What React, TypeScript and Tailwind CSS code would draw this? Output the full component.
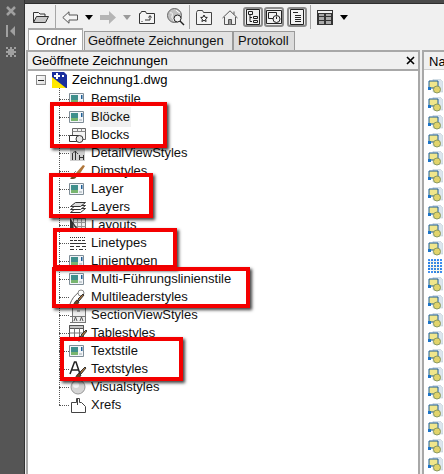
import React from "react";

const Sep = ({ c }: { c: string }) => <div className={`w-px h-[24px] bg-[#a6a6a6] shrink-0 ${c}`} />;

const Caret = ({ c = "#000", cn = "" }: { c?: string; cn?: string }) => (
  <svg className={`shrink-0 ${cn}`} width="8" height="5" viewBox="0 0 8 5"><path d="M0 0h8L4 5z" fill={c} /></svg>
);

const Folder = () => (
  <svg className="shrink-0" width="16" height="12" viewBox="0 0 16 12" fill="none" stroke="#333">
    <path d="M.5 11.500v-10h5l1.500 1.500h5v2" fill="#f3f3f3" />
    <path d="M.5 11.500l3-6h12l-3 6z" fill="#c9c9c9" />
  </svg>
);

const ArrowLeft = ({ cn }: { cn: string }) => (
  <svg className={`shrink-0 ${cn}`} width="16" height="13" viewBox="0 0 16 13"><path d="M7 .800L.8 6.500 7 12.200V9h8.500V4H7z" fill="#f4f4f4" stroke="#555" /></svg>
);
const ArrowRight = ({ cn }: { cn: string }) => (
  <svg className={`shrink-0 ${cn}`} width="16" height="13" viewBox="0 0 16 13"><path d="M9 0l7 6.500L9 13V9H0V4h9z" fill="#b5b5b5" /></svg>
);
const UpFolder = ({ cn }: { cn: string }) => (
  <svg className={`shrink-0 ${cn}`} width="16" height="14" viewBox="0 0 16 14" fill="none" stroke="#333">
    <path d="M.5 13.500v-10h1l1-2h4l1 2h8v10z" fill="#f4f4f4" />
    <path d="M6 10h5V6.500M9.500 7.500l1.500-2 1.500 2" />
    <path d="M2.500 11.500h2" strokeDasharray="1 1" />
  </svg>
);
const GlobeSearch = ({ cn }: { cn: string }) => (
  <svg className={`shrink-0 ${cn}`} width="18" height="18" viewBox="0 0 18 18" fill="none">
    <circle cx="7.500" cy="7.500" r="7" fill="#c0c0c0" stroke="#666" />
    <path d="M3 5c2-1 3 1 2 3s2 3 2 5M9 2c1 2 3 2 4 3" stroke="#fff" />
    <circle cx="10.500" cy="10.500" r="3.500" fill="#f2f2f2" stroke="#222" />
    <path d="M13 13l4 4" stroke="#222" strokeWidth="1.500" />
  </svg>
);
const FavFolder = ({ cn }: { cn: string }) => (
  <svg className={`shrink-0 ${cn}`} width="16" height="15" viewBox="0 0 16 15" fill="none" stroke="#444">
    <path d="M.5 14.500v-12l1-2h5l1 2h8v12z" fill="#f4f4f4" />
    <path d="M8 5l1 2.200 2.300.300-1.700 1.600.5 2.400L8 10.300l-2.100 1.200.5-2.400-1.700-1.600L7 7.200z" fill="#fff" stroke="#222" />
  </svg>
);
const Home = ({ cn }: { cn: string }) => (
  <svg className={`shrink-0 ${cn}`} width="16" height="15" viewBox="0 0 16 15" fill="none" stroke="#555">
    <path d="M.5 8L8 .8 15.500 8" />
    <path d="M2.500 7v7.500h11V7" fill="#eee" />
    <path d="M6.500 14.500V9.500h3v5" fill="#999" />
    <path d="M12 1.500v3" />
  </svg>
);
const Toggle = ({ children, c = "" }: { children: React.ReactNode; c?: string }) => (
  <div className={`w-[20px] h-[20px] shrink-0 flex items-center justify-center rounded-[3px] border-2 border-[#8c8c8c] bg-[#ececec] ${c}`}>
    {children}
  </div>
);
const TreeView = () => (
  <svg width="14" height="16" viewBox="0 0 14 16" fill="none" stroke="#222">
    <path d="M.5.500h13v15H.5z" fill="#f2f2f2" />
    <path d="M2.500 2.500h4v3h-4zM4 5.500v7h2M4 8.500h2M7.500 7.500h4v2h-4zM7.500 11.500h4v2h-4z" />
  </svg>
);
const PreviewView = () => (
  <svg width="16" height="14" viewBox="0 0 16 14" fill="none" stroke="#222">
    <path d="M.5.500h15v13H.5z" fill="#f2f2f2" />
    <path d="M2.500 2.500h8v6h-8z" />
    <circle cx="10.500" cy="9" r="3.500" fill="#f2f2f2" />
    <path d="M10.500 9V6.500" />
  </svg>
);
const DescView = () => (
  <svg width="14" height="16" viewBox="0 0 14 16" fill="none" stroke="#222">
    <path d="M.5.500h13v15H.5z" fill="#f2f2f2" />
    <path d="M3 3.500h5M5 6.500h6M5 8.500h6M5 10.500h6M5 12.500h6" />
  </svg>
);
const ViewsIcon = ({ cn }: { cn: string }) => (
  <svg className={`shrink-0 ${cn}`} width="16" height="15" viewBox="0 0 16 15">
    <path d="M0 0h16v15H0z" fill="#333" />
    <path d="M1 1h14v2H1z" fill="#f0f0f0" />
    <path d="M2 4h5v2H2zM9 4h5v2H9zM2 7h5v3H2zM9 7h5v3H9zM2 11h5v3H2zM9 11h5v3H9z" fill="#a9a9a9" />
  </svg>
);

const DwgIcon = () => (
  <svg width="15" height="16" viewBox="0 0 15 16">
    <path d="M0 0h12l3 3v13H0z" fill="#1a2f9e" />
    <path d="M0 5l14 11H0z" fill="#ffe800" />
    <path d="M4 1h2v2h2v2H6v2H4V5H2V3h2z" fill="#fff" />
    <path d="M10 3h2v2h-2z" fill="#fff" />
  </svg>
);

const DlgIcon = () => (
  <svg width="15" height="12" viewBox="0 0 15 12">
    <path d="M.5.500h14v11H.5z" fill="#f2f5f8" stroke="#7f8d97" />
    <path d="M2 2h7v8H2z" fill="#3f8f8c" />
    <path d="M2 7h7v3H2z" fill="#78b56f" />
    <path d="M10 8h3v2h-3z" fill="#c8cfd4" />
    <path d="M12 2h1.500v4H12z" fill="#1f5f96" />
  </svg>
);

const Brush = () => (
  <g>
    <path d="M7 16c-1 0-2-1-2-2 1 0 1-2 3-3l2 2c-1 2-2 3-3 3z" fill="#6f4522" />
    <path d="M9 10l5-5 1 1-5 6z" fill="#b0763a" />
  </g>
);

const Ico = ({ n }: { n: string }) => {
  if (n === "dlg") return <DlgIcon />;
  const s = { width: 18, height: 17, viewBox: "0 0 18 17", fill: "none", stroke: "#333" } as const;
  if (n === "blocks")
    return (
      <svg {...s}>
        <path d="M3.500 1.500h13v11h-13z" fill="#f4f4f4" stroke="#666" />
        <path d="M3.500 4.500h13M8.500 1.500v3M12.500 1.500v3" stroke="#888" />
        <path d="M.5 8.500h9v6h-9z" fill="#fff" />
        <circle cx="10.500" cy="12" r="3.500" fill="#e8e8e8" />
      </svg>
    );
  if (n === "detail")
    return (
      <svg {...s}>
        <path d="M1 1h15v15H1z" fill="#cfcfcf" stroke="none" />
        <path d="M3.500 9v6M6.500 6v9M3 9c2-3 4-3 6 0M10.500 10v5M14.500 10v5M10.500 12.500h4" />
      </svg>
    );
  if (n === "dim")
    return (
      <svg {...s}>
        <path d="M1 14l6-6" stroke="#888" />
        <path d="M4 16c-1 0-3 0-3-1 2 0 2-3 4-4l3 2c-1 2-2 3-4 3z" fill="#6f4522" stroke="none" />
        <path d="M7 10l7-8 2 1-6 9z" fill="#b0763a" stroke="none" />
      </svg>
    );
  if (n === "layers")
    return (
      <svg {...s}>
        <path d="M1.500 13.500l5-4h10l-5 4z" fill="#fff" />
        <path d="M1.500 10.500l5-4h10l-5 4z" fill="#fff" />
        <path d="M1.500 7.500l5-4h10l-5 4z" fill="#ddd" />
      </svg>
    );
  if (n === "layouts")
    return (
      <svg {...s}>
        <path d="M4.500 1.500h12v13h-12z" fill="#eee" stroke="#777" />
        <path d="M8.500 1.500v13M12.500 1.500v13M4.500 5.500h12M4.500 9.500h12" stroke="#999" />
        <path d="M1 1v14h3V7l5 8h2z" fill="#333" stroke="none" />
      </svg>
    );
  if (n === "lines")
    return (
      <svg {...s}>
        <path d="M1 2.500h16" strokeDasharray="1 1" />
        <path d="M1 5.500h16" strokeDasharray="3 1" />
        <path d="M1 8.500h16" />
        <path d="M1 11.500h16" strokeDasharray="4 2" />
        <path d="M1 14.500h16" strokeDasharray="4 2 1 2" />
      </svg>
    );
  if (n === "multi")
    return (
      <svg {...s}>
        <path d="M1 15c2-5 4-8 8-11" stroke="#666" />
        <circle cx="12" cy="4" r="3" fill="#fff" stroke="#888" />
        <Brush />
      </svg>
    );
  if (n === "section")
    return (
      <svg {...s}>
        <path d="M3.500 .5h13v15h-13z" fill="#eee" stroke="#777" />
        <path d="M1 9.500h16M1 15.500h16" stroke="#777" />
        <path d="M5 14l1.500-4 1.500 4M11 14l1.500-4 1.500 4" stroke="#555" />
        <path d="M8 4h3" stroke="#555" />
      </svg>
    );
  if (n === "table")
    return (
      <svg {...s}>
        <path d="M.5 .5h14v12H.5z" fill="#fff" stroke="#555" />
        <path d="M.5 .5h14v3H.5z" fill="#c5c5c5" stroke="#555" />
        <path d="M5.500 3.500v9M10.500 3.500v9M.5 8h14" stroke="#777" />
        <g transform="translate(3 0)"><Brush /></g>
      </svg>
    );
  if (n === "text")
    return (
      <svg {...s}>
        <path d="M1 13L5.500 1h1.500L11 13M3 9h6.500" stroke="#222" strokeWidth="1.500" />
        <g transform="translate(2 1)"><Brush /></g>
      </svg>
    );
  if (n === "visual")
    return (
      <svg {...s}>
        <circle cx="9" cy="8" r="7" fill="#d5d5d5" stroke="#999" />
        <circle cx="7" cy="6" r="3" fill="#f5f5f5" stroke="none" />
      </svg>
    );
  return (
    <svg {...s}>
      <path d="M2.500 5.500h5v-4h3v4h2l4 4v6h-14z" fill="#fff" stroke="#444" />
      <path d="M8.500 1v7" stroke="#444" />
    </svg>
  );
};

const items: [string, string, string?][] = [
  ["dlg", "Bemstile"],
  ["dlg", "Blöcke", "sel"],
  ["blocks", "Blocks"],
  ["detail", "DetailViewStyles"],
  ["dim", "Dimstyles"],
  ["dlg", "Layer"],
  ["layers", "Layers"],
  ["layouts", "Layouts"],
  ["lines", "Linetypes"],
  ["dlg", "Linientypen"],
  ["dlg", "Multi-Führungslinienstile"],
  ["multi", "Multileaderstyles"],
  ["section", "SectionViewStyles"],
  ["table", "Tablestyles"],
  ["dlg", "Textstile"],
  ["text", "Textstyles"],
  ["visual", "Visualstyles"],
  ["xref", "Xrefs"],
];

const FileIcon = ({ sel }: { sel?: boolean }) => (
  <svg width="15" height="15" viewBox="0 0 15 15">
    <defs>
      <pattern id="dots" width="3" height="3" patternUnits="userSpaceOnUse">
        <rect width="3" height="3" fill="#fff" />
        <rect width="2" height="2" fill="#1f7df0" />
      </pattern>
    </defs>
    <path d="M5 0h7l3 3v10H5z" fill="#dce6ee" stroke="#b6c4cf" strokeWidth="0.500" />
    <path d="M1 2h9v7H1z" fill="#f0e68c" stroke="#1d5c96" />
    <path d="M0 8h3v3H0z" fill="#1c74c8" />
    <circle cx="9" cy="10.500" r="3.500" fill="#e2d46a" stroke="#8a9a60" />
    {sel && <rect width="15" height="15" fill="url(#dots)" opacity="0.85" />}
  </svg>
);

const Box = ({ c }: { c: string }) => (
  <div className={`absolute border-[4px] border-[#f40000] shadow-[2px_2px_3px_rgba(0,0,0,0.75)] ${c}`} />
);

export default function App() {
  return (
    <div
      className="relative w-[444px] h-[474px] overflow-hidden bg-[#f0f0f0] flex text-[13px] text-black"
      style={{ fontFamily: '"Liberation Sans", Arial, sans-serif' }}
    >
      <div className="w-[25px] shrink-0 bg-[#555555] border-r border-[#333] flex flex-col items-center pt-[6px] gap-[9px] pr-[3px]">
        <svg width="10" height="10" viewBox="0 0 10 10"><path d="M1 1l8 8M9 1l-8 8" stroke="#a0a0a0" strokeWidth="2.500" /></svg>
        <svg width="10" height="12" viewBox="0 0 10 12"><path d="M0 0h2v12H0zM9 1v10L4 6z" fill="#a0a0a0" /></svg>
        <svg width="12" height="12" viewBox="0 0 12 12"><path d="M1 1h2v2h2V1h2v2h2V1h2v2H9v2h2v2H9v2h2v2H9V9H7v2H5V9H3v2H1V9h2V7H1V5h2V3H1z" fill="#a0a0a0" /></svg>
      </div>
      <div className="flex-1 flex flex-col min-w-0 pl-[1px]">
        <div className="h-[4px] bg-[#4a4a4a] -ml-[1px] shrink-0 border-b border-[#2f2f2f]" />
        <div className="h-[24px] flex items-center pl-[7px] pt-[2px] shrink-0">
          <Folder />
          <Sep c="ml-[6px]" />
          <ArrowLeft cn="ml-[6px]" />
          <Caret cn="ml-[7px]" />
          <ArrowRight cn="ml-[7px]" />
          <Caret c="#9a9a9a" cn="ml-[7px]" />
          <UpFolder cn="ml-[8px]" />
          <GlobeSearch cn="ml-[12px]" />
          <Sep c="ml-[4px]" />
          <FavFolder cn="ml-[6px]" />
          <Home cn="ml-[10px]" />
          <Toggle c="ml-[5px]"><TreeView /></Toggle>
          <Toggle c="ml-[1px]"><PreviewView /></Toggle>
          <Toggle c="ml-[3px]"><DescView /></Toggle>
          <Sep c="ml-[3px]" />
          <ViewsIcon cn="ml-[6px]" />
          <Caret cn="ml-[7px]" />
        </div>
        <div className="h-[22px] flex items-end pl-[2px] shrink-0 text-[#111]">
          <div className="h-[22px] w-[55px] shrink-0 pl-[7px] pt-[3px] bg-white border-t-2 border-l border-r border-[#a8a8a8] leading-[15px]">Ordner</div>
          <div className="h-[19px] w-[149px] shrink-0 pl-[3px] pt-[1px] bg-[#e3e3e3] border border-b-0 border-[#9a9a9a] ml-px leading-[15px]">Geöffnete Zeichnungen</div>
          <div className="h-[19px] w-[62px] shrink-0 pl-[4px] pt-[1px] bg-[#dcdcdc] border border-b-0 border-[#9a9a9a] leading-[15px]">Protokoll</div>
        </div>
        <div className="flex-1 flex min-h-0">
          <div className="w-[394px] border-t-[2px] border-l-[2px] border-r-[2px] border-[#a8a8a8] flex flex-col bg-white shrink-0">
            <div className="h-[17px] bg-[#f0f0f0] border-b-[2px] border-[#a8a8a8] flex items-center justify-between pl-[4px] pr-[3px] shrink-0 box-content">
              <span>Geöffnete Zeichnungen</span>
              <svg width="9" height="9" viewBox="0 0 9 9"><path d="M1 1l7 7M8 1L1 8" stroke="#000" strokeWidth="1.600" /></svg>
            </div>
            <div className="relative flex-1">
              <div className="h-[18px] flex items-center pl-[8px]">
                <div className="w-[10px] h-[10px] shrink-0 border border-[#8a8a8a] bg-gradient-to-br from-white to-[#ddd] flex items-center justify-center">
                  <div className="w-[6px] h-px bg-[#222]" />
                </div>
                <div className="ml-[6px] shrink-0 flex"><DwgIcon /></div>
                <span className="ml-[5px]">Zeichnung1.dwg</span>
              </div>
              <div className="absolute left-[31px] top-[17px] h-[317px] border-l border-dotted border-[#555]" />
              <div className="ml-[31px] pt-px">
                {items.map(([ic, t, sel]) => (
                  <div key={t} className="h-[18px] flex items-center">
                    <div className="w-[10px] shrink-0 border-t border-dotted border-[#555]" />
                    <div className="w-[18px] flex justify-start shrink-0"><Ico n={ic} /></div>
                    <span className={`ml-[3px] px-[1px] text-[#111] ${sel ? "bg-[#f0f0f0]" : ""}`}>{t}</span>
                  </div>
                ))}
              </div>
            </div>
          </div>
          <div className="ml-[2px] flex-1 border-t-[2px] border-l-[2px] border-[#a8a8a8] bg-white flex flex-col min-w-0 overflow-hidden">
            <div className="h-[17px] bg-[#f0f0f0] border-b border-[#d0d0d0] pl-[5px] box-content shrink-0 overflow-hidden">Na</div>
            <div className="pl-[4px] pt-[9px] flex flex-col gap-[3px]">
              {Array.from({ length: 22 }).map((_, i) => (
                <div key={i} className="w-[15px] h-[15px] shrink-0">
                  <FileIcon sel={i === 10} />
                </div>
              ))}
            </div>
          </div>
        </div>
      </div>
      <Box c="left-[50px] top-[102px] w-[117px] h-[46px]" />
      <Box c="left-[49px] top-[173px] w-[104px] h-[45px]" />
      <Box c="left-[53px] top-[228px] w-[124px] h-[41px]" />
      <Box c="left-[52px] top-[267px] w-[198px] h-[41px]" />
      <Box c="left-[60px] top-[337px] w-[123px] h-[44px]" />
    </div>
  );
}
